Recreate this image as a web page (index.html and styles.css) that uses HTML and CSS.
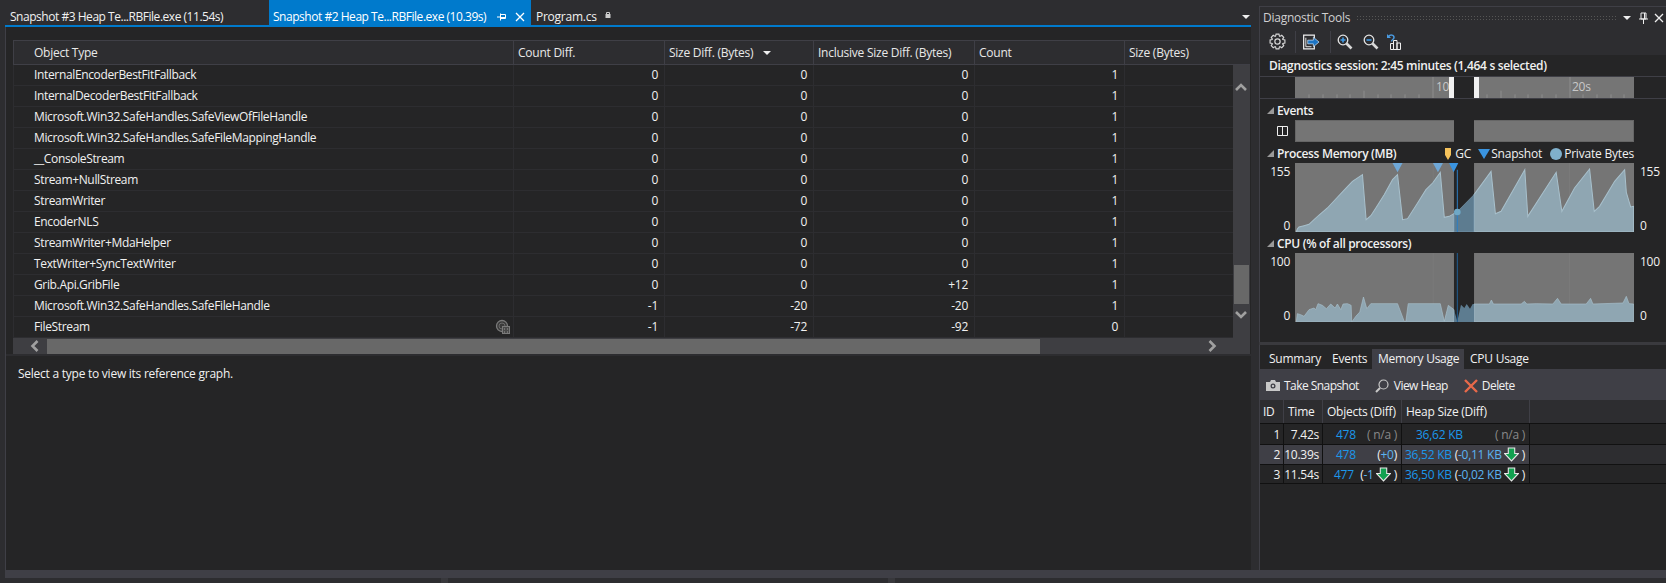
FILE: index.html
```html
<!DOCTYPE html>
<html lang="en">
<head>
<meta charset="utf-8">
<title>Diagnostic Tools</title>
<link rel="stylesheet" href="styles.css">
</head>
<body>
<div class="app">
  <div class="workspace">
    <main class="doc">
      <div class="tabs">
        <div class="tab tab-1">Snapshot #3 Heap Te...RBFile.exe (11.54s)</div>
        <div class="tab tab-active">
          <span>Snapshot #2 Heap Te...RBFile.exe (10.39s)</span>
          <svg class="pin" viewBox="0 0 10 8"><path d="M0 4h3M3 1.500h1M3.500 .5v7M3.500 1.500h5v4h-5M3.500 4.500h5" fill="none" stroke="#fff"/></svg>
          <svg class="close" viewBox="0 0 10 10"><path d="M1 1l8 8M9 1l-8 8" stroke="#fff" stroke-width="1.300"/></svg>
        </div>
        <div class="tab tab-3">
          <span>Program.cs</span>
          <svg class="lock" viewBox="0 0 6 7"><path d="M1.500 3V1.500h3V3" fill="none" stroke="#ccc"/><rect x="0.500" y="3" width="5" height="4" fill="#ccc"/></svg>
        </div>
        <div class="tab-fill"><i class="tri"></i></div>
      </div>
      <div class="accent"></div>
      <div class="table-wrap">
        <div class="table">
          <div class="thead">
            <div>Object Type</div><div>Count Diff.</div><div>Size Diff. (Bytes)<i class="tri sort"></i></div><div>Inclusive Size Diff. (Bytes)</div><div>Count</div><div>Size (Bytes)</div>
          </div>
          <div class="tbody">
            <div class="rows">
              <div class="row"><div>InternalEncoderBestFitFallback</div><div>0</div><div>0</div><div>0</div><div>1</div><div></div></div>
              <div class="row"><div>InternalDecoderBestFitFallback</div><div>0</div><div>0</div><div>0</div><div>1</div><div></div></div>
              <div class="row"><div>Microsoft.Win32.SafeHandles.SafeViewOfFileHandle</div><div>0</div><div>0</div><div>0</div><div>1</div><div></div></div>
              <div class="row"><div>Microsoft.Win32.SafeHandles.SafeFileMappingHandle</div><div>0</div><div>0</div><div>0</div><div>1</div><div></div></div>
              <div class="row"><div>__ConsoleStream</div><div>0</div><div>0</div><div>0</div><div>1</div><div></div></div>
              <div class="row"><div>Stream+NullStream</div><div>0</div><div>0</div><div>0</div><div>1</div><div></div></div>
              <div class="row"><div>StreamWriter</div><div>0</div><div>0</div><div>0</div><div>1</div><div></div></div>
              <div class="row"><div>EncoderNLS</div><div>0</div><div>0</div><div>0</div><div>1</div><div></div></div>
              <div class="row"><div>StreamWriter+MdaHelper</div><div>0</div><div>0</div><div>0</div><div>1</div><div></div></div>
              <div class="row"><div>TextWriter+SyncTextWriter</div><div>0</div><div>0</div><div>0</div><div>1</div><div></div></div>
              <div class="row"><div>Grib.Api.GribFile</div><div>0</div><div>0</div><div>+12</div><div>1</div><div></div></div>
              <div class="row"><div>Microsoft.Win32.SafeHandles.SafeFileHandle</div><div>-1</div><div>-20</div><div>-20</div><div>1</div><div></div></div>
              <div class="row"><div>FileStream<svg class="gc" viewBox="0 0 16 16"><circle cx="7" cy="7" r="5.500" fill="#3a3a3a" stroke="#7a7a7a" stroke-width="1.300"/><circle cx="7" cy="7" r="3" fill="none" stroke="#6a6a6a"/><rect x="7.500" y="7.500" width="7" height="7" fill="#4a4a4a" stroke="#7a7a7a"/><path d="M9 10h1M12 10h1M9 13h1M12 13h1" stroke="#999"/></svg></div><div>-1</div><div>-72</div><div>-92</div><div>0</div><div></div></div>
            </div>
            <div class="vscroll">
              <svg class="arrow arrow-up" viewBox="0 0 12 8"><path d="M1 7l5-5 5 5" fill="none" stroke="#a0a0a0" stroke-width="2.600"/></svg>
              <div class="vthumb"></div>
              <svg class="arrow arrow-down" viewBox="0 0 12 8"><path d="M1 1l5 5 5-5" fill="none" stroke="#a0a0a0" stroke-width="2.600"/></svg>
            </div>
          </div>
          <div class="hscroll">
            <svg class="harrow" viewBox="0 0 8 12"><path d="M7 1L2 6l5 5" fill="none" stroke="#a0a0a0" stroke-width="2.600"/></svg>
            <div class="hthumb"></div>
            <svg class="harrow harrow-right" viewBox="0 0 8 12"><path d="M1 1l5 5-5 5" fill="none" stroke="#a0a0a0" stroke-width="2.600"/></svg>
          </div>
        </div>
      </div>
      <div class="graph-pane">Select a type to view its reference graph.</div>
    </main>

    <aside class="diag">
      <div class="diag-title">
        <span>Diagnostic Tools</span>
        <div class="grip"></div>
        <i class="tri"></i>
        <svg class="title-pin" viewBox="0 0 9 12"><path d="M2 1h5v6H2zM0 7h9M4.500 7v5M5.500 1v6" fill="none" stroke="#eee"/></svg>
        <svg class="title-close" viewBox="0 0 10 10"><path d="M1 1l8 8M9 1l-8 8" stroke="#eee" stroke-width="1.300"/></svg>
      </div>
      <div class="diag-toolbar">
        <svg class="ticon gear" viewBox="0 0 18 18"><polygon points="14.64,6.95 16.85,7.47 16.85,10.53 14.64,11.05 14.44,11.54 15.63,13.47 13.47,15.63 11.54,14.44 11.05,14.64 10.53,16.85 7.47,16.85 6.95,14.64 6.46,14.44 4.53,15.63 2.37,13.47 3.56,11.54 3.36,11.05 1.15,10.53 1.15,7.47 3.36,6.95 3.56,6.46 2.37,4.53 4.53,2.37 6.46,3.56 6.95,3.36 7.47,1.15 10.53,1.15 11.05,3.36 11.54,3.56 13.47,2.37 15.63,4.53 14.44,6.46" fill="none" stroke="#d8d8d8" stroke-width="1.200"/><circle cx="9" cy="9" r="2.800" fill="none" stroke="#d8d8d8" stroke-width="1.300"/></svg>
        <div class="tsep tsep-1"></div>
        <svg class="ticon export" viewBox="0 0 18 16"><path d="M12 4V.7H.7v14.600H12V12" fill="none" stroke="#eee" stroke-width="1.300"/><path d="M3 3.500v9.500h6" fill="none" stroke="#eee"/><path d="M5 6h6V3l6 5-6 5v-3H5z" fill="#1c74c4" stroke="#dbe8f5" stroke-width=".7"/></svg>
        <div class="tsep tsep-2"></div>
        <svg class="ticon zoom-in" viewBox="0 0 16 16"><circle cx="6" cy="6" r="4.800" fill="#2d2d30" stroke="#e4e4e4" stroke-width="1.300"/><path d="M3.500 6h5M6 3.500v5" stroke="#3f9be6" stroke-width="1.600"/><path d="M9.500 9.500l5 5" stroke="#d8d8d8" stroke-width="2.600"/></svg>
        <svg class="ticon zoom-out" viewBox="0 0 16 16"><circle cx="6" cy="6" r="4.800" fill="#2d2d30" stroke="#e4e4e4" stroke-width="1.300"/><path d="M3.500 6h5" stroke="#3f9be6" stroke-width="1.600"/><path d="M9.500 9.500l5 5" stroke="#d8d8d8" stroke-width="2.600"/></svg>
        <svg class="ticon reset" viewBox="0 0 16 16"><path d="M1.500 2.500C3 .5 7 .5 7 3.500c0 2-2.500 2-2.500 4" fill="none" stroke="#4a9ae0" stroke-width="1.500"/><path d="M0 0v4h4z" fill="#4a9ae0"/><path d="M3.500 15.500V9.500h3v6zM6.500 15.500V6.500h3.500v9zM10 15.500V9h3.500v6.500z" fill="none" stroke="#eee"/></svg>
      </div>
      <div class="session">Diagnostics session: 2:45 minutes (1,464 s selected)</div>
      <div class="ruler-row">
        <div class="track ruler">
          <span class="tick-label tl-10">10s</span>
          <span class="tick-label tl-20">20s</span>
          <svg class="ruler-ticks" viewBox="0 0 339 23" preserveAspectRatio="none"><path d="M14 23v-4M28 23v-4M42 23v-4M55 23v-4M69 23v-8M83 23v-4M96 23v-4M110 23v-4M124 23v-4M138 23v-23M165 23v-4M179 23v-4M192 23v-4M206 23v-8M220 23v-4M233 23v-4M247 23v-4M261 23v-4M275 23v-23M288 23v-4M302 23v-4M316 23v-4M329 23v-4" stroke="#8f8f8f"/></svg>
          <div class="handles"></div>
        </div>
      </div>
      <div class="sect-head"><i class="caret"></i>Events</div>
      <div class="chart-row events-row">
        <div class="gutter"><svg class="pause" viewBox="0 0 11 10"><path d="M.500.500h10v9H.500zM5.500.500v9" fill="none" stroke="#eee"/></svg></div>
        <div class="track events-track"><div class="sel"></div></div>
      </div>
      <div class="sect-head">
        <i class="caret"></i><span class="grow">Process Memory (MB)</span>
        <span class="legend lg-gc"><svg class="lg" viewBox="0 0 8 12"><path d="M1 0h6v7l-3 5-3-5z" fill="#f5c25b"/></svg>GC</span>
        <span class="legend lg-snapshot"><svg class="lg lg-snap" viewBox="0 0 12 10"><path d="M0 0h12L6 10z" fill="#3a94e0"/></svg>Snapshot</span>
        <span class="legend lg-private"><i class="dot"></i>Private Bytes</span>
      </div>
      <div class="chart-row mem-row">
        <div class="axis"><span>155</span><span>0</span></div>
        <svg class="chart" viewBox="118 70 1015 207" preserveAspectRatio="none">
          <rect x="118" y="70" width="1015" height="207" fill="#757575"/>
          <path d="M532 70v207M940 70v207" stroke="#7a7a7a" stroke-width="3"/>
          <rect x="594" y="70" width="60" height="207" fill="#252526"/>
          <polygon points="122,277 125,268 130,262 145,258 160,254 175,240 190,226 215,205 240,178 270,146 290,125 320,105 331,240 345,228 360,205 385,165 410,120 425,105 440,240 455,237 485,190 510,150 530,130 553,98 565,233 580,230 594,222 594,277" fill="#8fa6b2" stroke="#a8c0cc" stroke-width="3"/>
          <polygon points="654,277 654,165 705,95 718,222 735,215 806,90 815,230 900,98 917,215 955,145 1000,88 1014,215 1030,200 1075,125 1105,90 1110,158 1123,202 1132,200 1132,277" fill="#8fa6b2" stroke="#a8c0cc" stroke-width="3"/>
          <polygon points="594,277 594,222 604,216 654,165 654,277" fill="#5d7c90" stroke="#7f9fb3" stroke-width="2"/>
          <path d="M604 90v187" stroke="#2b7fc4" stroke-width="3"/>
          <circle cx="604" cy="217" r="10" fill="#6fa8c6"/>
          <path d="M410 70h30l-15 28z" fill="#6fa8d8"/>
          <path d="M531 70h30l-15 28z" fill="#6fa8d8"/>
          <path d="M579 70h28l-14 28z" fill="#3a94e0"/>
        </svg>
        <div class="axis axis-right"><span>155</span><span>0</span></div>
      </div>
      <div class="sect-head"><i class="caret"></i>CPU (% of all processors)</div>
      <div class="chart-row cpu-row">
        <div class="axis"><span>100</span><span>0</span></div>
        <svg class="chart" viewBox="118 340 1015 207" preserveAspectRatio="none">
          <rect x="118" y="340" width="1015" height="207" fill="#757575"/>
          <path d="M532 340v207M940 340v207" stroke="#7a7a7a" stroke-width="3"/>
          <rect x="594" y="340" width="60" height="207" fill="#252526"/>
          <polygon points="122,547 125,522 135,525 145,530 160,510 175,505 180,510 187,492 200,497 212,507 225,493 238,505 245,493 255,510 262,493 275,492 286,497 288,547 300,530 312,517 323,472 333,507 345,492 425,492 445,545 450,545 457,492 553,492 565,545 577,497 594,510 594,547" fill="#8fa6b2" stroke="#a8c0cc" stroke-width="2"/>
          <polygon points="654,547 654,493 700,493 706,481 712,493 795,493 805,485 812,493 840,492 890,493 904,476 915,493 990,493 1003,476 1010,493 1100,490 1110,470 1118,492 1132,493 1132,547" fill="#8fa6b2" stroke="#a8c0cc" stroke-width="2"/>
          <polygon points="594,547 594,510 604,545 615,495 625,505 632,493 642,507 650,493 654,493 654,547" fill="#5d7c90"/>
          <path d="M604 340v207" stroke="#1f5f94" stroke-width="3"/>
        </svg>
        <div class="axis axis-right"><span>100</span><span>0</span></div>
      </div>
      <div class="diag-split"></div>
      <div class="subtabs">
        <div class="subtab st-summary">Summary</div>
        <div class="subtab st-events">Events</div>
        <div class="subtab st-memory">Memory Usage</div>
        <div class="subtab">CPU Usage</div>
      </div>
      <div class="mem-toolbar">
        <span class="mbtn"><svg class="cam" viewBox="0 0 14 11"><path d="M0 2h4l1-2h4l1 2h4v9H0z" fill="#c8c8c8"/><circle cx="7" cy="6" r="2.500" fill="#3f3f46"/><circle cx="7" cy="6" r="1.200" fill="#c8c8c8"/></svg>Take Snapshot</span>
        <span class="mbtn"><svg class="mag" viewBox="0 0 14 14"><circle cx="8.500" cy="5.500" r="4.500" fill="none" stroke="#c8c8c8" stroke-width="1.200"/><path d="M5 9l-4 4" stroke="#c8c8c8" stroke-width="2"/></svg>View Heap</span>
        <span class="mbtn"><svg class="del" viewBox="0 0 14 14"><path d="M1 1l12 12M13 1L1 13" stroke="#e8694a" stroke-width="2.400"/></svg>Delete</span>
      </div>
      <div class="snap-grid">
        <div class="snap-row snap-head"><div>ID</div><div>Time</div><div>Objects (Diff)</div><div>Heap Size (Diff)</div><div></div></div>
        <div class="snap-row">
          <div class="r">1</div><div class="r">7.42s</div>
          <div class="split"><a class="link l1">478</a><span class="muted">( n/a )</span></div>
          <div class="split"><a class="link l2">36,62 KB</a><span class="muted">( n/a )</span></div><div></div>
        </div>
        <div class="snap-row snap-sel">
          <div class="r">2</div><div class="r">10.39s</div>
          <div class="split"><a class="link l1">478</a><span class="diff">(<b>+0</b>)</span></div>
          <div class="split"><a class="link">36,52 KB</a><span class="diff">(<b>-0,11 KB</b><svg class="down" viewBox="0 0 14 14"><path d="M4 1h6v5h3.500L7 13 .5 6H4z" fill="#12a150" stroke="#e8e8e8"/></svg>)</span></div><div></div>
        </div>
        <div class="snap-row">
          <div class="r">3</div><div class="r">11.54s</div>
          <div class="split"><a class="link l3">477</a><span class="diff">(<b>-1</b><svg class="down" viewBox="0 0 14 14"><path d="M4 1h6v5h3.500L7 13 .5 6H4z" fill="#12a150" stroke="#e8e8e8"/></svg>)</span></div>
          <div class="split"><a class="link">36,50 KB</a><span class="diff">(<b>-0,02 KB</b><svg class="down" viewBox="0 0 14 14"><path d="M4 1h6v5h3.500L7 13 .5 6H4z" fill="#12a150" stroke="#e8e8e8"/></svg>)</span></div><div></div>
        </div>
      </div>
    </aside>
  </div>
  <div class="status-band"></div>
  <div class="status-foot"><i class="notch notch-1"></i><i class="notch notch-2"></i></div>
</div>
</body>
</html>
```
FILE: styles.css
```css
* { box-sizing: border-box; }
html, body { margin: 0; padding: 0; }
body { width: 1666px; height: 583px; overflow: hidden; background: #2d2d30; color: #f1f1f1; font: 12px/16px "Open Sans", "Noto Sans", sans-serif; letter-spacing: -0.25px; }
svg { display: block; flex: none; }
i { display: block; }
.app { display: flex; flex-direction: column; height: 583px; }
.workspace { display: flex; height: 570px; }

.doc { width: 1246px; margin-left: 5px; display: flex; flex-direction: column; background: #252526; border-left: 1px solid #3f3f46; }
.tabs { display: flex; height: 25px; margin-left: -1px; background: #2d2d30; }
.tab { height: 25px; padding: 9px 0 0 5px; white-space: nowrap; display: flex; align-items: flex-start; letter-spacing: -0.47px; }
.tab-1 { width: 264px; }
.tab-active { width: 262px; background: #007acc; color: #fff; padding-left: 4px; }
.tab-active .pin { width: 10px; height: 8px; margin: 4px 0 0 11px; }
.tab-active .close { width: 10px; height: 10px; margin: 3px 0 0 8px; }
.tab-3 { letter-spacing: -0.25px; }
.lock { width: 6px; height: 7px; margin: 2px 0 0 8px; }
.tab-fill { flex: 1; position: relative; }
.tri { width: 0; height: 0; border-left: 4px solid transparent; border-right: 4px solid transparent; border-top: 4px solid #eee; }
.tab-fill .tri { position: absolute; right: 1px; top: 15px; }
.accent { height: 2px; background: #007acc; margin-left: -1px; }

.table-wrap { flex: none; padding: 13px 0 0 7px; height: 327px; }
.table { width: 1237px; height: 314px; display: flex; flex-direction: column; }
.thead, .row { display: grid; grid-template-columns: 499px 151px 149px 161px 150px 1fr; }
.thead { height: 25px; background: #2d2d30; border: solid #3f3f46; border-width: 1px 0 1px 1px; }
.thead > div { padding: 4px 0 0 4px; border-left: 1px solid #3f3f46; position: relative; color: #e8e8e8; }
.thead > div:first-child { padding-left: 20px; border-left: 0; }
.sort { position: absolute; left: 98px; top: 10px; }
.tbody { display: flex; height: 273px; }
.rows { width: 1220px; }
.row { height: 21px; border-bottom: 1px solid #2d2d30; border-left: 1px solid #2d2d30; }
.row > div { padding: 2px 6px 0 0; text-align: right; border-left: 1px solid #2d2d30; position: relative; }
.row > div:first-child { text-align: left; padding-left: 20px; border-left: 0; letter-spacing: -0.35px; }
.gc { position: absolute; left: 481px; top: 2px; width: 16px; height: 16px; }

.vscroll { width: 17px; background: #3e3e42; position: relative; }
.arrow { position: absolute; left: 2px; width: 12px; height: 8px; }
.arrow-up { top: 18px; }
.arrow-down { top: 246px; }
.vthumb { position: absolute; left: 1px; width: 15px; top: 200px; height: 39px; background: #686868; }
.hscroll { height: 16px; background: #3e3e42; display: flex; align-items: center; position: relative; }
.harrow { width: 9px; height: 12px; margin-left: 17px; }
.hthumb { position: absolute; left: 34px; top: 1px; bottom: 0; width: 993px; background: #686868; }
.harrow-right { position: absolute; left: 1195px; margin: 0; }

.graph-pane { flex: 1; padding: 10px 0 0 12px; border-top: 2px solid #2d2d30; }

.diag { width: 407px; margin-left: 8px; display: flex; flex-direction: column; background: #252526; border-left: 1px solid #3f3f46; border-top: 1px solid #3f3f46; margin-top: 6px; height: 564px; }
.diag-title { height: 21px; background: #2d2d30; display: flex; align-items: center; padding: 0 2px 0 3px; color: #d0d0d0; }
.grip { flex: 1; height: 5px; margin: 0 6px; background-image: radial-gradient(#555 0.6px, transparent 0.7px); background-size: 3px 3px; }
.diag-title .tri { margin-right: 8px; }
.title-pin { width: 9px; height: 12px; margin-right: 6px; }
.title-close { width: 10px; height: 10px; }
.diag-toolbar { height: 27px; background: #2d2d30; display: flex; align-items: center; padding-left: 9px; }
.ticon { width: 16px; height: 16px; }
.gear { width: 17px; height: 17px; }
.export { width: 17px; height: 16px; }
.tsep { width: 1px; height: 22px; background: #3f3f46; }
.tsep-1 { margin: 0 7px 0 9px; }
.tsep-2 { margin: 0 6px 0 10px; }
.zoom-out { margin-left: 10px; }
.reset { margin-left: 8px; }
.session { height: 21px; padding: 3px 0 0 9px; font-weight: 600; letter-spacing: -0.33px; }
.ruler-row { height: 23px; padding-left: 35px; border-top: 1px solid #3f3f46; border-bottom: 1px solid #3f3f46; }
.track { background: #757575; width: 339px; position: relative; }
.ruler { height: 21px; }
.tick-label { position: absolute; top: 2px; color: #c8c8c8; }
.tl-10 { left: 141px; }
.tl-20 { left: 277px; }
.ruler-ticks { position: absolute; left: 0; top: 0; width: 339px; height: 21px; }
.handles { position: absolute; left: 154px; top: 0; width: 30px; height: 21px; background: #252526; border-left: 5px solid #f1f1f1; border-right: 5px solid #f1f1f1; }

.sect-head { height: 21px; display: flex; align-items: center; padding: 2px 0 0 7px; font-weight: 600; letter-spacing: -0.33px; }
.caret { width: 0; height: 0; border-bottom: 7px solid #9a9a9a; border-left: 7px solid transparent; margin-right: 3px; }
.chart-row { display: flex; }
.gutter { width: 35px; display: flex; justify-content: center; align-items: center; padding-left: 9px; }
.pause { width: 11px; height: 10px; }
.events-row { height: 22px; }
.events-track { height: 22px; border: 1px solid #666; }
.sel { position: absolute; left: 158px; top: -1px; bottom: -1px; width: 20px; background: #252526; }
.grow { flex: 1; }
.legend { display: flex; align-items: center; font-weight: 400; letter-spacing: -0.2px; }
.lg-gc { margin-right: 7px; }
.lg-snapshot { margin-right: 8px; }
.lg-private { padding-right: 32px; }
.lg { width: 8px; height: 12px; margin-right: 3px; }
.lg-snap { width: 12px; height: 10px; margin-right: 1px; }
.dot { width: 12px; height: 12px; border-radius: 50%; background: #7fb0cc; margin-right: 2px; }
.mem-row, .cpu-row { height: 69px; }
.chart { width: 339px; height: 69px; }
.axis { width: 35px; height: 71px; display: flex; flex-direction: column; justify-content: space-between; align-items: flex-end; padding: 1px 5px 0 0; }
.axis-right { width: auto; align-items: flex-start; padding: 1px 0 0 6px; }

.diag-split { height: 3px; margin: 20px 0 0 -1px; background: #3a3a3e; }
.subtabs { display: flex; align-items: flex-end; height: 24px; }
.subtab { height: 20px; padding: 2px 0 0 6px; }
.st-summary { width: 66px; padding-left: 9px; }
.st-events { width: 46px; }
.st-memory { width: 92px; background: #3f3f46; }
.mem-toolbar { height: 31px; background: #3f3f46; display: flex; align-items: center; padding: 2px 0 0 6px; gap: 16px; letter-spacing: -0.55px; }
.mbtn { display: flex; align-items: center; gap: 4px; }
.cam { width: 14px; height: 11px; }
.mag { width: 14px; height: 14px; margin-right: 1px; }
.del { width: 14px; height: 14px; }
.snap-grid { display: flex; flex-direction: column; }
.snap-row { display: grid; grid-template-columns: 23px 39px 79px 128px 1fr; height: 20px; border-bottom: 1px solid #111; }
.snap-row > div { border-left: 1px solid #111; padding-top: 2px; }
.snap-row > div:first-child { border-left: 0; }
.snap-row:nth-child(2) { height: 21px; }
.snap-row:nth-child(2) > div { padding-top: 3px; }
.snap-row:last-child { height: 19px; }
.snap-row.snap-head { height: 24px; background: #2d2d30; }
.snap-head > div { padding: 4px 0 0 4px; border-left: 1px solid #3f3f46; }
.snap-head > div:first-child { padding-left: 3px; }
.r { text-align: right; padding-right: 3px; }
.snap-sel { background: #3f3f46; }
.snap-sel > div:last-child { background: #2d2d30; }
.split { display: flex; justify-content: space-between; padding-right: 4px; white-space: nowrap; }
.link { color: #1c97ea; padding-left: 3px; }
.l1 { margin-left: 10px; }
.l2 { margin-left: 11px; }
.l3 { margin-left: 8px; }
.muted { color: #8a8a8a; }
.diff { display: flex; white-space: nowrap; }
.diff b { font-weight: 400; color: #5cb3f0; }
.down { width: 15px; height: 15px; margin: 0 3px 0 2px; }

.status-band { height: 8px; margin-left: 5px; background: #3f3f46; }
.status-foot { height: 5px; margin-left: 5px; display: flex; }
.notch { width: 7px; background: #38383c; }
.notch-1 { margin-left: 436px; }
.notch-2 { margin-left: 440px; }
```
